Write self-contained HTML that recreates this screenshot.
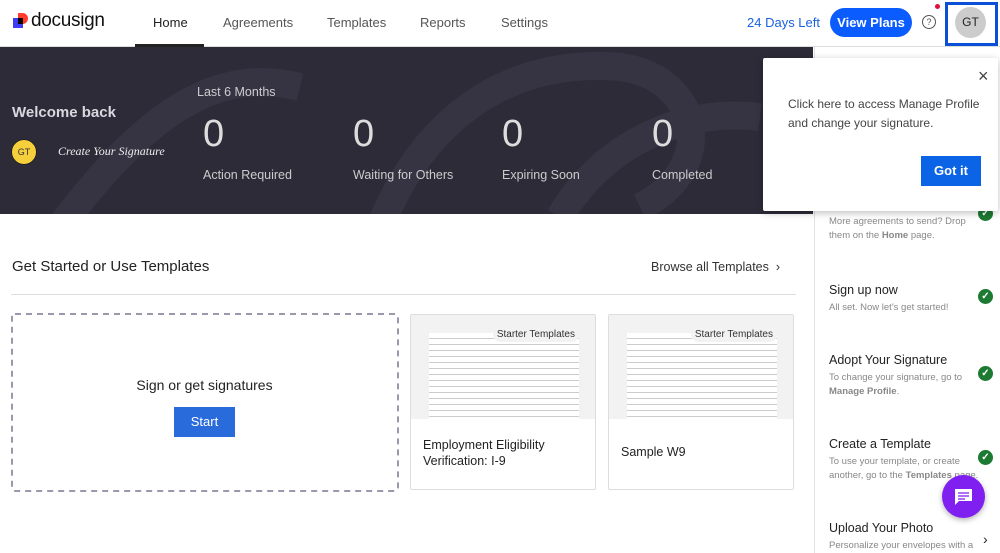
<!DOCTYPE html>
<html><head><meta charset="utf-8"><style>
*{box-sizing:border-box;margin:0;padding:0}
body{width:1000px;height:553px;overflow:hidden;position:relative;background:#fff;font-family:"Liberation Sans",sans-serif;color:#222}
.abs{position:absolute}
.nav{position:absolute;top:0;left:0;width:1000px;height:47px;background:#fff;border-bottom:1px solid #ddd}
.nav a{position:absolute;top:15px;font-size:13px;color:#555}
.banner{position:absolute;top:47px;left:0;width:813px;height:167px;background:#2d2b38;overflow:hidden}
.w{color:#d8d8de}
.num{font-size:38px;color:#ddd;top:66px}
.lbl{font-size:12.5px;color:#ccc;top:121px}
.side{position:absolute;left:814px;top:47px;width:186px;height:506px;background:#fff;border-left:1px solid #e2e2e2}
.it{position:absolute;left:14px;font-size:12.5px;color:#222}
.it small{display:block;font-size:9.5px;color:#888;line-height:14px;margin-top:4px}
.chk{position:absolute;left:163px;width:15px;height:15px;border-radius:50%;background:#1d7a32;color:#fff;font-size:10px;text-align:center;line-height:15px;font-weight:bold}
.card{position:absolute;top:314px;width:186px;height:176px;background:#fff;border:1px solid #ddd;border-radius:2px;overflow:hidden}
.card .img{height:104px;background:#f2f2f2;position:relative}
.doc{position:absolute;left:18px;top:18px;width:150px;height:86px;background:#fff;background-image:repeating-linear-gradient(#fff 0 5px,#ccc 5px 6px)}
.tag{position:absolute;right:16px;top:12px;background:#f2f2f2;border-radius:8px;padding:2px 4px;font-size:10px;color:#333}
</style></head><body>
<div class="nav">
 <div class="abs" style="left:13px;top:13px;width:15px;height:16px">
  <div class="abs" style="left:5px;top:0;width:10px;height:11px;background:#ff3c2e;border-radius:0 6px 6px 0"></div>
  <div class="abs" style="left:0;top:5px;width:10px;height:10px;background:#3d3df5"></div>
  <div class="abs" style="left:5px;top:5px;width:5px;height:6px;background:#000"></div>
 </div>
 <div class="abs" style="left:31px;top:10px;font-size:19px;color:#111;letter-spacing:-0.3px">docusign</div>
 <a style="left:153px;color:#222">Home</a>
 <div class="abs" style="left:135px;top:44px;width:69px;height:3px;background:#222"></div>
 <a style="left:223px">Agreements</a>
 <a style="left:327px">Templates</a>
 <a style="left:420px">Reports</a>
 <a style="left:501px">Settings</a>
 <a style="left:747px;color:#1a62e0">24 Days Left</a>
 <div class="abs" style="left:830px;top:8px;width:82px;height:29px;background:#0b5cff;border-radius:15px;color:#fff;font-size:13px;font-weight:bold;text-align:center;line-height:29px">View Plans</div>
 <div class="abs" style="left:922px;top:15px;width:14px;height:14px;border:1.3px solid #555;border-radius:50%;font-size:9px;text-align:center;line-height:12px;color:#555">?</div>
 <div class="abs" style="left:935px;top:4px;width:5px;height:5px;background:#e0103a;border-radius:50%"></div>
 <div class="abs" style="left:945px;top:2px;width:53px;height:44px;border:3px solid #0b4fd6"></div>
 <div class="abs" style="left:955px;top:7px;width:31px;height:31px;background:#ccc;border-radius:50%;font-size:12px;text-align:center;line-height:31px;color:#222">GT</div>
</div>
<div class="banner">
 <svg class="abs" style="left:0;top:0" width="813" height="167"><path d="M60 180 C150 60 220 20 300 40 M380 180 C420 80 500 10 620 20 C700 30 720 120 640 160 M560 170 C600 100 680 60 760 70" stroke="#363443" stroke-width="28" fill="none"/></svg>
 <div class="abs w" style="left:12px;top:57px;font-size:15px;font-weight:bold">Welcome back</div>
 <div class="abs" style="left:11px;top:92px;width:26px;height:26px;border-radius:50%;background:#f6cf3d;border:1px solid #222;font-size:9px;text-align:center;line-height:24px;color:#333">GT</div>
 <div class="abs" style="left:58px;top:97px;font-family:'Liberation Serif',serif;font-style:italic;font-size:12px;color:#eee">Create Your Signature</div>
 <div class="abs" style="left:197px;top:38px;font-size:12.5px;color:#ccc">Last 6 Months</div>
 <div class="abs num" style="left:203px">0</div><div class="abs lbl" style="left:203px">Action Required</div>
 <div class="abs num" style="left:353px">0</div><div class="abs lbl" style="left:353px">Waiting for Others</div>
 <div class="abs num" style="left:502px">0</div><div class="abs lbl" style="left:502px">Expiring Soon</div>
 <div class="abs num" style="left:652px">0</div><div class="abs lbl" style="left:652px">Completed</div>
</div>
<div class="abs" style="left:12px;top:258px;font-size:15px">Get Started or Use Templates</div>
<div class="abs" style="left:651px;top:260px;font-size:12.5px;color:#333">Browse all Templates &nbsp;›</div>
<div class="abs" style="left:11px;top:294px;width:785px;height:1px;background:#ddd"></div>
<svg class="abs" style="left:11px;top:313px" width="388" height="179"><rect x="1" y="1" width="386" height="177" rx="3" fill="none" stroke="#777890" stroke-width="1.5" stroke-dasharray="6 5"/></svg>
<div class="abs" style="left:11px;top:377px;width:387px;text-align:center;font-size:14px">Sign or get signatures</div>
<div class="abs" style="left:174px;top:407px;width:61px;height:30px;background:#2a6bdc;color:#fff;font-size:13px;text-align:center;line-height:30px">Start</div>
<div class="card" style="left:410px"><div class="img"><div class="doc"></div><div class="tag">Starter Templates</div></div>
 <div style="padding:18px 12px 0;font-size:12.5px;line-height:16px">Employment Eligibility Verification: I-9</div></div>
<div class="card" style="left:608px"><div class="img"><div class="doc"></div><div class="tag">Starter Templates</div></div>
 <div style="padding:26px 12px 0;font-size:12.5px">Sample W9</div></div>
<div class="side">
 <div class="it" style="top:164px"><small>More agreements to send? Drop<br>them on the <b>Home</b> page.</small></div>
 <div class="chk" style="top:159px">✓</div>
 <div class="it" style="top:236px">Sign up now<small>All set. Now let's get started!</small></div>
 <div class="chk" style="top:242px">✓</div>
 <div class="it" style="top:306px">Adopt Your Signature<small>To change your signature, go to<br><b>Manage Profile</b>.</small></div>
 <div class="chk" style="top:319px">✓</div>
 <div class="it" style="top:390px">Create a Template<small>To use your template, or create<br>another, go to the <b>Templates</b> page.</small></div>
 <div class="chk" style="top:403px">✓</div>
 <div class="it" style="top:474px">Upload Your Photo<small>Personalize your envelopes with a</small></div>
 <div class="abs" style="left:168px;top:484px;font-size:14px">›</div>
</div>
<div class="abs" style="left:942px;top:475px;width:43px;height:43px;border-radius:50%;background:#7f1ff0;box-shadow:0 2px 6px rgba(0,0,0,.3)">
 <svg width="43" height="43"><path d="M13 14h17v12h-13l-4 4z" fill="#fff"/><path d="M16 18h11M16 21h11M16 24h7" stroke="#7f1ff0" stroke-width="1.3"/></svg>
</div>
<div class="abs" style="left:763px;top:58px;width:235px;height:153px;background:#fff;box-shadow:0 2px 8px rgba(0,0,0,.25);border-radius:2px">
 <div class="abs" style="left:215px;top:8px;font-size:18px;color:#444">×</div>
 <div class="abs" style="left:25px;top:37px;font-size:12px;color:#444;line-height:19px">Click here to access Manage Profile<br>and change your signature.</div>
 <div class="abs" style="left:158px;top:98px;width:60px;height:30px;background:#0b63e5;color:#fff;font-size:13px;font-weight:bold;text-align:center;line-height:30px">Got it</div>
</div>
</body></html>
